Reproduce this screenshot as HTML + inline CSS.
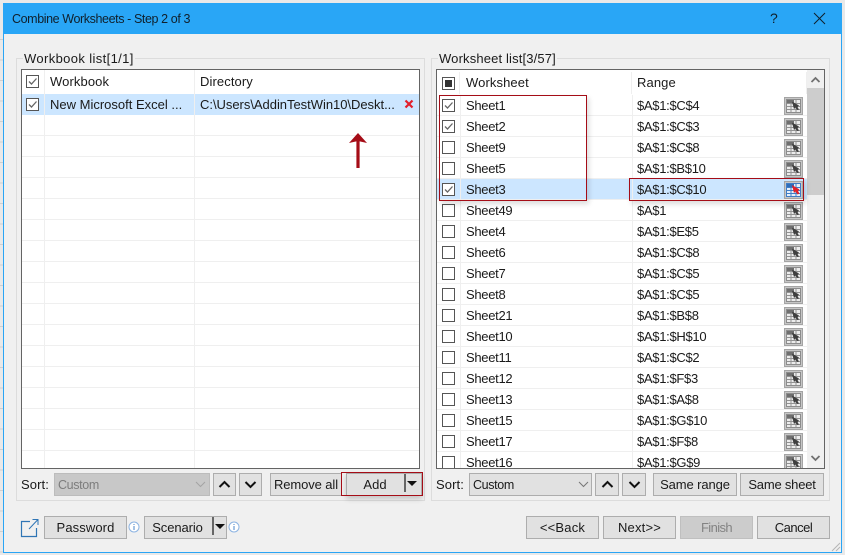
<!DOCTYPE html>
<html><head><meta charset="utf-8">
<style>
html,body{margin:0;padding:0;width:845px;height:555px;overflow:hidden;background:#e9e9e9;font-family:"Liberation Sans",sans-serif;font-size:13px;color:#1a1a1a}
*{box-sizing:border-box}
.a{position:absolute}
#win{left:3px;top:3px;width:839px;height:550px;background:#f0f0f0;border:1px solid #2aa5f5;border-top:0}
#tb{left:3px;top:3px;width:839px;height:31px;background:#29a6f6}
.gb{border:1px solid #dcdcdc;height:443px;top:58px}
.lg{top:51px;background:#f0f0f0;padding:0 1px;line-height:15px;letter-spacing:.15px}
.tbl{background:#fff;border:1px solid #646464;top:69px;height:400px;overflow:hidden}
.t{white-space:nowrap;line-height:16px;letter-spacing:.1px}
.r .t{margin-top:1px;letter-spacing:-.3px}
.cb{width:13px;height:13px;border:1px solid #555;background:#fff}
.cb svg{position:absolute;left:0;top:0}
.hl{height:1px;background:#efefef}
.vl{width:1px;background:#efefef}
.btn{background:#e1e1e1;border:1px solid #adadad;height:23px;text-align:center;line-height:21px;letter-spacing:.2px;white-space:nowrap}
.ic{width:19px;height:18px}
.cu{font-size:12.5px;letter-spacing:-.35px}
</style></head><body>
<svg width="0" height="0" style="position:absolute">
<defs><filter id="bl" x="-50%" y="-50%" width="200%" height="200%"><feGaussianBlur stdDeviation="2"/></filter></defs>
<symbol id="ck" viewBox="0 0 11 11"><path d="M2 5.500L4.500 8L9.500 2.500" fill="none" stroke="#666" stroke-width="1.300"/></symbol>
<symbol id="gi" viewBox="0 0 19 18"><rect x=".5" y=".5" width="18" height="17" fill="#c6c6c6" stroke="#a4a4a4"/><rect x="2.500" y="2.500" width="14" height="13" fill="#ececec" stroke="#8c8c8c"/><path d="M3 6.500H16M3 9.500H16M3 12.500H16M7 3V15M12 3V15" stroke="#929292" fill="none"/><rect x="3" y="3" width="7" height="3" fill="#6f6f6f"/><path d="M8 4.500L15 8.500L13.500 10L15 12.500L13 13L11.500 10.500L10 12Z" fill="#3f3f3f"/></symbol>
<symbol id="gr" viewBox="0 0 19 18"><rect x=".5" y=".5" width="18" height="17" fill="#c6c6c6" stroke="#a4a4a4"/><rect x="2.500" y="2.500" width="14" height="13" fill="#e6f0fb" stroke="#3f7cc6"/><path d="M3 6.500H16M3 9.500H16M3 12.500H16M7 3V15M12 3V15" stroke="#3f7cc6" fill="none"/><rect x="3" y="3" width="7" height="3" fill="#2f6db8"/><path d="M8 4L15.500 8.500L14 10L15.500 12.500L13.500 13.500L11.500 10.500L10 12Z" fill="#e0202a"/></symbol>
</svg>

<div class="a" style="left:0;top:39px;width:3px;height:516px;background:repeating-linear-gradient(to bottom,#cfcfcf 0,#cfcfcf 1px,transparent 1px,transparent 20.500px)"></div>
<div class="a" id="win"></div>
<div class="a" id="tb"></div>
<div class="a t" style="left:12px;top:11px;font-size:12.5px;letter-spacing:-.4px;color:#10202c">Combine Worksheets - Step 2 of 3</div>
<div class="a t" style="left:770px;top:10px;font-size:14px;color:#10202c">?</div>
<svg class="a" style="left:813px;top:12px" width="13" height="13"><path d="M1 1L12 12M12 1L1 12" stroke="#10202c" fill="none"/></svg>

<!-- left group -->
<div class="a gb" style="left:16px;width:409px"></div>
<div class="a lg" style="left:23px;letter-spacing:.37px">Workbook list[1/1]</div>
<div class="a tbl" style="left:21px;width:399px">
 <div class="a" style="left:0;top:24px;width:397px;height:21px;background:#cce6ff"></div>
 <div class="a vl" style="left:22px;top:0;height:398px"></div>
 <div class="a vl" style="left:172px;top:0;height:398px"></div>
 <div class="a hl" style="left:0;top:65px;width:397px"></div>
 <div class="a hl" style="left:0;top:86px;width:397px"></div>
 <div class="a hl" style="left:0;top:107px;width:397px"></div>
 <div class="a hl" style="left:0;top:128px;width:397px"></div>
 <div class="a hl" style="left:0;top:149px;width:397px"></div>
 <div class="a hl" style="left:0;top:170px;width:397px"></div>
 <div class="a hl" style="left:0;top:191px;width:397px"></div>
 <div class="a hl" style="left:0;top:212px;width:397px"></div>
 <div class="a hl" style="left:0;top:233px;width:397px"></div>
 <div class="a hl" style="left:0;top:254px;width:397px"></div>
 <div class="a hl" style="left:0;top:275px;width:397px"></div>
 <div class="a hl" style="left:0;top:296px;width:397px"></div>
 <div class="a hl" style="left:0;top:317px;width:397px"></div>
 <div class="a hl" style="left:0;top:338px;width:397px"></div>
 <div class="a hl" style="left:0;top:359px;width:397px"></div>
 <div class="a hl" style="left:0;top:380px;width:397px"></div>
 <div class="a cb" style="left:4px;top:5px"><svg width="11" height="11"><use href="#ck"/></svg></div>
 <div class="a cb" style="left:4px;top:28px"><svg width="11" height="11"><use href="#ck"/></svg></div>
 <div class="a t" style="left:28px;top:4px">Workbook</div>
 <div class="a t" style="left:178px;top:4px">Directory</div>
 <div class="a t" style="left:28px;top:27px;letter-spacing:0">New Microsoft Excel ...</div>
 <div class="a t" style="left:178px;top:27px;letter-spacing:-.03px">C:\Users\AddinTestWin10\Deskt...</div>
 <svg class="a" style="left:382px;top:29px" width="10" height="10"><path d="M1.500 1.500L8.500 8.500M8.500 1.500L1.500 8.500" stroke="#e2202c" stroke-width="2.200" fill="none"/></svg>
</div>
<svg class="a" style="left:340px;top:128px" width="36" height="48">
 <path d="M21 12V42" stroke="#000" stroke-opacity=".35" stroke-width="5" fill="none" filter="url(#bl)"/>
 <path d="M18 8V40" stroke="#a50d17" stroke-width="3.200" fill="none"/>
 <path d="M18 5L27 15L18 13L9 15Z" fill="#a50d17"/>
</svg>

<div class="a t" style="left:21px;top:477px">Sort:</div>
<div class="a" style="left:54px;top:473px;width:156px;height:23px;background:#c8c8c8;border:1px solid #bcbcbc"></div>
<div class="a t cu" style="left:58px;top:477px;color:#7d7d7d">Custom</div>
<svg class="a" style="left:195px;top:481px" width="11" height="7"><path d="M1 1L5.500 5.500L10 1" stroke="#a4a4a4" fill="none"/></svg>
<div class="a btn" style="left:213px;top:473px;width:23px"></div>
<svg class="a" style="left:218px;top:480px" width="13" height="9"><path d="M1.500 7L6.500 2L11.500 7" stroke="#111" stroke-width="2" fill="none"/></svg>
<div class="a btn" style="left:239px;top:473px;width:23px"></div>
<svg class="a" style="left:244px;top:480px" width="13" height="9"><path d="M1.500 2L6.500 7L11.500 2" stroke="#111" stroke-width="2" fill="none"/></svg>
<div class="a btn" style="left:270px;top:473px;width:72px;letter-spacing:-.1px">Remove all</div>
<div class="a btn" style="left:346px;top:473px;width:76px;padding-right:18px;box-shadow:0 3px 5px rgba(0,0,0,.18);letter-spacing:0">Add</div>
<div class="a" style="left:404px;top:474px;width:2px;height:18px;background:#666"></div>
<svg class="a" style="left:407px;top:481px" width="11" height="6"><path d="M0 0H10L5 5Z" fill="#111"/></svg>
<div class="a" style="left:341px;top:472px;width:82px;height:24px;border:1px solid #a50d17"></div>

<!-- right group -->
<div class="a gb" style="left:431px;width:399px"></div>
<div class="a lg" style="left:438px">Worksheet list[3/57]</div>
<div class="a tbl" style="left:436px;width:389px">
 <div class="a vl" style="left:22px;top:2px;height:22px"></div>
 <div class="a vl" style="left:194px;top:2px;height:22px"></div>
 <div class="a vl" style="left:369px;top:2px;height:22px"></div>
 <div class="a cb" style="left:5px;top:7px"></div>
 <div class="a" style="left:8px;top:10px;width:7px;height:7px;background:#333"></div>
 <div class="a t" style="left:29px;top:5px">Worksheet</div>
 <div class="a t" style="left:200px;top:5px">Range</div>

 <div class="a r" style="left:0;top:25px;width:370px;height:373px;overflow:hidden">
  <div class="a" style="left:0;top:84px;width:370px;height:21px;background:#cce6ff"></div>
  <div class="a vl" style="left:23px;top:0;height:373px"></div>
  <div class="a vl" style="left:195px;top:0;height:373px"></div>
  <div class="a hl" style="left:0;top:20px;width:370px"></div>
  <div class="a hl" style="left:0;top:41px;width:370px"></div>
  <div class="a hl" style="left:0;top:62px;width:370px"></div>
  <div class="a hl" style="left:0;top:83px;width:370px"></div>
  <div class="a hl" style="left:0;top:104px;width:370px"></div>
  <div class="a hl" style="left:0;top:125px;width:370px"></div>
  <div class="a hl" style="left:0;top:146px;width:370px"></div>
  <div class="a hl" style="left:0;top:167px;width:370px"></div>
  <div class="a hl" style="left:0;top:188px;width:370px"></div>
  <div class="a hl" style="left:0;top:209px;width:370px"></div>
  <div class="a hl" style="left:0;top:230px;width:370px"></div>
  <div class="a hl" style="left:0;top:251px;width:370px"></div>
  <div class="a hl" style="left:0;top:272px;width:370px"></div>
  <div class="a hl" style="left:0;top:293px;width:370px"></div>
  <div class="a hl" style="left:0;top:314px;width:370px"></div>
  <div class="a hl" style="left:0;top:335px;width:370px"></div>
  <div class="a hl" style="left:0;top:356px;width:370px"></div>

  <div class="a cb" style="left:5px;top:4px"><svg width="11" height="11"><use href="#ck"/></svg></div>
  <div class="a cb" style="left:5px;top:25px"><svg width="11" height="11"><use href="#ck"/></svg></div>
  <div class="a cb" style="left:5px;top:46px"></div>
  <div class="a cb" style="left:5px;top:67px"></div>
  <div class="a cb" style="left:5px;top:88px"><svg width="11" height="11"><use href="#ck"/></svg></div>
  <div class="a cb" style="left:5px;top:109px"></div>
  <div class="a cb" style="left:5px;top:130px"></div>
  <div class="a cb" style="left:5px;top:151px"></div>
  <div class="a cb" style="left:5px;top:172px"></div>
  <div class="a cb" style="left:5px;top:193px"></div>
  <div class="a cb" style="left:5px;top:214px"></div>
  <div class="a cb" style="left:5px;top:235px"></div>
  <div class="a cb" style="left:5px;top:256px"></div>
  <div class="a cb" style="left:5px;top:277px"></div>
  <div class="a cb" style="left:5px;top:298px"></div>
  <div class="a cb" style="left:5px;top:319px"></div>
  <div class="a cb" style="left:5px;top:340px"></div>
  <div class="a cb" style="left:5px;top:361px"></div>

  <div class="a t" style="left:29px;top:2px">Sheet1</div><div class="a t" style="left:200px;top:2px">$A$1:$C$4</div>
  <div class="a t" style="left:29px;top:23px">Sheet2</div><div class="a t" style="left:200px;top:23px">$A$1:$C$3</div>
  <div class="a t" style="left:29px;top:44px">Sheet9</div><div class="a t" style="left:200px;top:44px">$A$1:$C$8</div>
  <div class="a t" style="left:29px;top:65px">Sheet5</div><div class="a t" style="left:200px;top:65px">$A$1:$B$10</div>
  <div class="a t" style="left:29px;top:86px">Sheet3</div><div class="a t" style="left:200px;top:86px">$A$1:$C$10</div>
  <div class="a t" style="left:29px;top:107px">Sheet49</div><div class="a t" style="left:200px;top:107px">$A$1</div>
  <div class="a t" style="left:29px;top:128px">Sheet4</div><div class="a t" style="left:200px;top:128px">$A$1:$E$5</div>
  <div class="a t" style="left:29px;top:149px">Sheet6</div><div class="a t" style="left:200px;top:149px">$A$1:$C$8</div>
  <div class="a t" style="left:29px;top:170px">Sheet7</div><div class="a t" style="left:200px;top:170px">$A$1:$C$5</div>
  <div class="a t" style="left:29px;top:191px">Sheet8</div><div class="a t" style="left:200px;top:191px">$A$1:$C$5</div>
  <div class="a t" style="left:29px;top:212px">Sheet21</div><div class="a t" style="left:200px;top:212px">$A$1:$B$8</div>
  <div class="a t" style="left:29px;top:233px">Sheet10</div><div class="a t" style="left:200px;top:233px">$A$1:$H$10</div>
  <div class="a t" style="left:29px;top:254px">Sheet11</div><div class="a t" style="left:200px;top:254px">$A$1:$C$2</div>
  <div class="a t" style="left:29px;top:275px">Sheet12</div><div class="a t" style="left:200px;top:275px">$A$1:$F$3</div>
  <div class="a t" style="left:29px;top:296px">Sheet13</div><div class="a t" style="left:200px;top:296px">$A$1:$A$8</div>
  <div class="a t" style="left:29px;top:317px">Sheet15</div><div class="a t" style="left:200px;top:317px">$A$1:$G$10</div>
  <div class="a t" style="left:29px;top:338px">Sheet17</div><div class="a t" style="left:200px;top:338px">$A$1:$F$8</div>
  <div class="a t" style="left:29px;top:359px">Sheet16</div><div class="a t" style="left:200px;top:359px">$A$1:$G$9</div>

  <svg class="a ic" style="left:347px;top:2px"><use href="#gi"/></svg>
  <svg class="a ic" style="left:347px;top:23px"><use href="#gi"/></svg>
  <svg class="a ic" style="left:347px;top:44px"><use href="#gi"/></svg>
  <svg class="a ic" style="left:347px;top:65px"><use href="#gi"/></svg>
  <svg class="a ic" style="left:347px;top:86px"><use href="#gr"/></svg>
  <svg class="a ic" style="left:347px;top:107px"><use href="#gi"/></svg>
  <svg class="a ic" style="left:347px;top:128px"><use href="#gi"/></svg>
  <svg class="a ic" style="left:347px;top:149px"><use href="#gi"/></svg>
  <svg class="a ic" style="left:347px;top:170px"><use href="#gi"/></svg>
  <svg class="a ic" style="left:347px;top:191px"><use href="#gi"/></svg>
  <svg class="a ic" style="left:347px;top:212px"><use href="#gi"/></svg>
  <svg class="a ic" style="left:347px;top:233px"><use href="#gi"/></svg>
  <svg class="a ic" style="left:347px;top:254px"><use href="#gi"/></svg>
  <svg class="a ic" style="left:347px;top:275px"><use href="#gi"/></svg>
  <svg class="a ic" style="left:347px;top:296px"><use href="#gi"/></svg>
  <svg class="a ic" style="left:347px;top:317px"><use href="#gi"/></svg>
  <svg class="a ic" style="left:347px;top:338px"><use href="#gi"/></svg>
  <svg class="a ic" style="left:347px;top:359px"><use href="#gi"/></svg>
 </div>
 <div class="a" style="left:370px;top:0;width:17px;height:398px;background:#f0f0f0"></div>
 <div class="a" style="left:370px;top:18px;width:17px;height:107px;background:#cdcdcd"></div>
 <svg class="a" style="left:373px;top:6px" width="11" height="8"><path d="M1.500 6L5.500 2L9.500 6" stroke="#707070" stroke-width="1.800" fill="none"/></svg>
 <svg class="a" style="left:373px;top:384px" width="11" height="8"><path d="M1.500 2L5.500 6L9.500 2" stroke="#707070" stroke-width="1.800" fill="none"/></svg>
</div>

<div class="a" style="left:439px;top:95px;width:148px;height:106px;border:1px solid #a50d17;box-shadow:2px 3px 5px rgba(0,0,0,.14)"></div>
<div class="a" style="left:629px;top:178px;width:175px;height:23px;border:1px solid #a50d17;box-shadow:2px 3px 5px rgba(0,0,0,.14)"></div>

<div class="a t" style="left:436px;top:477px">Sort:</div>
<div class="a" style="left:469px;top:473px;width:123px;height:23px;background:#e1e1e1;border:1px solid #adadad"></div>
<div class="a t cu" style="left:473px;top:477px">Custom</div>
<svg class="a" style="left:578px;top:481px" width="11" height="7"><path d="M1 1L5.500 5.500L10 1" stroke="#777" fill="none"/></svg>
<div class="a btn" style="left:595px;top:473px;width:24px"></div>
<svg class="a" style="left:601px;top:480px" width="13" height="9"><path d="M1.500 7L6.500 2L11.500 7" stroke="#111" stroke-width="2" fill="none"/></svg>
<div class="a btn" style="left:622px;top:473px;width:24px"></div>
<svg class="a" style="left:628px;top:480px" width="13" height="9"><path d="M1.500 2L6.500 7L11.500 2" stroke="#111" stroke-width="2" fill="none"/></svg>
<div class="a btn" style="left:653px;top:473px;width:84px;letter-spacing:-.1px">Same range</div>
<div class="a btn" style="left:740px;top:473px;width:84px;letter-spacing:-.2px">Same sheet</div>

<!-- bottom -->
<svg class="a" style="left:20px;top:518px" width="20" height="20"><path d="M10 3.500H1.500V18.500H16.500V10" stroke="#2f75b5" stroke-width="1.200" fill="none"/><path d="M9 11L17.500 2M12.500 1.500H18V7" stroke="#2f75b5" stroke-width="1" fill="none"/></svg>
<div class="a btn" style="left:44px;top:516px;width:83px;letter-spacing:.1px">Password</div>
<svg class="a" style="left:128px;top:521px" width="12" height="12"><circle cx="6" cy="6" r="5" fill="#fff" stroke="#8db4e2"/><path d="M6 5V9M6 3V4" stroke="#4a86c8"/></svg>
<div class="a btn" style="left:144px;top:516px;width:83px;padding-right:16px;letter-spacing:-.1px">Scenario</div>
<div class="a" style="left:212px;top:517px;width:2px;height:18px;background:#666"></div>
<svg class="a" style="left:215px;top:524px" width="11" height="6"><path d="M0 0H10L5 5Z" fill="#111"/></svg>
<svg class="a" style="left:228px;top:521px" width="12" height="12"><circle cx="6" cy="6" r="5" fill="#fff" stroke="#8db4e2"/><path d="M6 5V9M6 3V4" stroke="#4a86c8"/></svg>
<div class="a btn" style="left:526px;top:516px;width:73px">&lt;&lt;Back</div>
<div class="a btn" style="left:603px;top:516px;width:73px">Next&gt;&gt;</div>
<div class="a btn" style="left:680px;top:516px;width:73px;background:#cccccc;border-color:#bfbfbf;color:#838383;letter-spacing:-.6px">Finish</div>
<div class="a btn" style="left:757px;top:516px;width:73px;letter-spacing:-.5px">Cancel</div>
<svg class="a" style="left:831px;top:542px" width="10" height="10"><path d="M9 1L1 9M9 5L5 9" stroke="#b5b5b5" fill="none"/></svg>
</body></html>
